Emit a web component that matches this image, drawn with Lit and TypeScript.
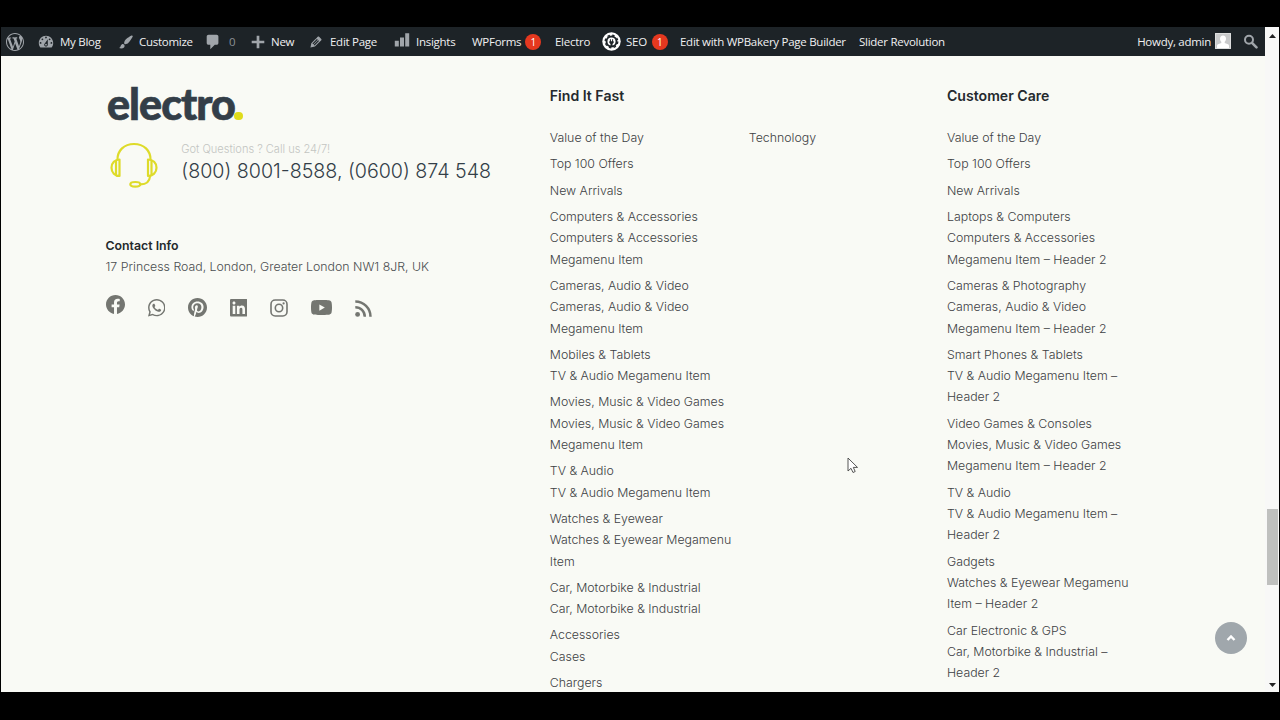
import { LitElement, html, css, svg } from "lit";
import { customElement } from "lit/decorators.js";

const dash = {
  wp: "M20 10c0-5.51-4.49-10-10-10C4.48 0 0 4.49 0 10c0 5.52 4.48 10 10 10 5.51 0 10-4.48 10-10zM7.78 15.37L4.37 6.22c.55-.02 1.17-.08 1.17-.08.5-.06.44-1.13-.06-1.11 0 0-1.45.11-2.37.11-.18 0-.37 0-.58-.01C4.12 2.69 6.87 1.11 10 1.11c2.33 0 4.45.87 6.05 2.34-.68-.11-1.65.39-1.65 1.58 0 .74.45 1.36.9 2.1.35.61.55 1.36.55 2.46 0 1.49-1.4 5-1.4 5l-3.03-8.37c.54-.02.82-.17.82-.17.5-.05.44-1.25-.06-1.22 0 0-1.44.12-2.38.12-.87 0-2.33-.12-2.33-.12-.5-.03-.56 1.2-.06 1.22l.92.08 1.26 3.41zM17.41 10c.24-.64.74-1.87.43-4.25.7 1.29 1.05 2.71 1.05 4.25 0 3.29-1.73 6.24-4.4 7.78.97-2.59 1.94-5.2 2.92-7.78zM6.1 18.09C3.12 16.65 1.11 13.53 1.11 10c0-1.3.23-2.48.72-3.59C3.25 10.3 4.67 14.2 6.1 18.09zm4.03-6.63l2.58 6.98c-.86.29-1.76.45-2.71.45-.79 0-1.57-.11-2.29-.33.81-2.38 1.62-4.74 2.42-7.1z",
  gauge: "M3.76 16h12.48c1.1-1.37 1.76-3.11 1.76-5 0-4.42-3.58-8-8-8s-8 3.58-8 8c0 1.89.66 3.63 1.76 5zM10 4c.55 0 1 .45 1 1s-.45 1-1 1-1-.45-1-1 .45-1 1-1zM6 6c.55 0 1 .45 1 1s-.45 1-1 1-1-.45-1-1 .45-1 1-1zm8 0c.55 0 1 .45 1 1s-.45 1-1 1-1-.45-1-1 .45-1 1-1zm-5.37 5.55L12 7v6c0 1.1-.9 2-2 2s-2-.9-2-2c0-.57.24-1.08.63-1.45zM4 10c.55 0 1 .45 1 1s-.45 1-1 1-1-.45-1-1 .45-1 1-1zm12 0c.55 0 1 .45 1 1s-.45 1-1 1-1-.45-1-1 .45-1 1-1zm-5 3c0-.55-.45-1-1-1s-1 .45-1 1 .45 1 1 1 1-.45 1-1z",
  brush: "M18.33 3.57s.27-.8-.31-1.36c-.53-.52-1.22-.24-1.22-.24-.61.3-5.76 3.47-7.67 5.57-.86.96-2.06 3.79-1.09 4.82.92.98 3.96-.17 4.79-1 2.06-2.06 5.21-7.17 5.5-7.79zM1.4 17.65c2.37-1.56 1.46-3.41 3.23-4.64.93-.65 2.22-.62 3.08.29.63.67.8 2.57-.16 3.46-1.57 1.45-4 1.55-6.15.89z",
  comment: "M5 2h9c1.1 0 2 .9 2 2v7c0 1.1-.9 2-2 2h-2l-5 5v-5H5c-1.1 0-2-.9-2-2V4c0-1.1.9-2 2-2z",
  plus: "M17 8.5v3h-5.5V17h-3v-5.5H3v-3h5.500V3h3v5.500z",
  pencil: "M13.89 3.39l2.71 2.72c.46.46.42 1.24.03 1.640l-8.010 8.020-5.560 1.160 1.160-5.580s7.600-7.630 7.990-8.030c.39-.39 1.220-.39 1.680.07zm-2.730 2.790l-5.590 5.610 1.110 1.110 5.540-5.650zm-2.970 8.230l5.580-5.600-1.070-1.080-5.590 5.600z",
  bars: "M1 11h5v7H1zM7.500 7h5v11h-5zM14 1.500h5V18h-5z",
};

const social = [
  { cls: "fb", box: "8 8 496 496", d: "M504 256C504 119 393 8 256 8S8 119 8 256c0 123.78 90.69 226.38 209.25 245V327.69h-63V256h63v-54.64c0-62.15 37-96.48 93.67-96.48 27.14 0 55.52 4.84 55.52 4.84v61h-31.28c-30.8 0-40.41 19.12-40.41 38.73V256h68.78l-11 71.69h-57.78V501C413.31 482.38 504 379.78 504 256z" },
  { cls: "wa", box: "0 32 448 448", d: "M380.9 97.1C339 55.1 283.2 32 223.9 32c-122.4 0-222 99.6-222 222 0 39.1 10.2 77.3 29.6 111L0 480l117.7-30.9c32.4 17.7 68.9 27 106.1 27h.1c122.3 0 224.1-99.6 224.1-222 0-59.3-25.2-115-67.1-157zm-157 341.6c-33.2 0-65.7-8.9-94-25.7l-6.7-4-69.8 18.3L72 359.2l-4.4-7c-18.5-29.4-28.2-63.3-28.2-98.2 0-101.7 82.8-184.5 184.6-184.5 49.3 0 95.6 19.2 130.4 54.1 34.8 34.9 56.2 81.2 56.1 130.5 0 101.8-84.9 184.6-186.6 184.6zm101.2-138.2c-5.5-2.8-32.8-16.2-37.9-18-5.1-1.9-8.8-2.8-12.5 2.8-3.7 5.6-14.3 18-17.6 21.8-3.2 3.7-6.5 4.2-12 1.4-32.6-16.3-54-29.1-75.5-66-5.7-9.8 5.7-9.1 16.3-30.3 1.8-3.7.9-6.9-.5-9.7-1.4-2.8-12.5-30.1-17.1-41.2-4.5-10.8-9.1-9.3-12.5-9.5-3.2-.2-6.900-.2-10.600-.2-3.700 0-9.700 1.400-14.800 6.900-5.100 5.600-19.400 19-19.400 46.300 0 27.300 19.900 53.700 22.600 57.400 2.800 3.700 39.100 59.700 94.800 83.800 35.200 15.200 49 16.500 66.600 13.900 10.700-1.600 32.800-13.400 37.400-26.400 4.600-13 4.600-24.100 3.200-26.400-1.300-2.500-5-3.900-10.500-6.600z" },
  { cls: "pin", box: "0 8 496 496", d: "M496 256c0 137-111 248-248 248-25.6 0-50.2-3.9-73.4-11.1 10.1-16.5 25.2-43.5 30.8-65 3-11.6 15.4-59 15.4-59 8.1 15.4 31.7 28.5 56.8 28.5 74.8 0 128.7-68.8 128.7-154.3 0-81.9-66.9-143.2-152.9-143.2-107 0-163.9 71.8-163.9 150.1 0 36.4 19.4 81.7 50.3 96.1 4.7 2.2 7.2 1.2 8.3-3.3.8-3.4 5-20.3 6.9-28.1.6-2.5.3-4.7-1.7-7.1-10.1-12.5-18.3-35.3-18.3-56.6 0-54.7 41.4-107.6 112-107.6 60.9 0 103.6 41.5 103.6 100.900 0 67.100-33.900 113.600-78 113.600-24.300 0-42.600-20.100-36.700-44.800 7-29.500 20.500-61.300 20.500-82.600 0-19-10.200-34.900-31.400-34.900-24.900 0-44.900 25.700-44.900 60.200 0 22 7.400 36.800 7.400 36.800s-24.500 103.800-29 123.200c-5 21.400-3 51.600-.9 71.200C65.400 450.900 0 361.100 0 256 0 119 111 8 248 8s248 111 248 248z" },
  { cls: "li", box: "0 32 448 448", d: "M416 32H31.900C14.300 32 0 46.500 0 64.300v383.400C0 465.500 14.300 480 31.900 480H416c17.600 0 32-14.500 32-32.300V64.300c0-17.800-14.400-32.300-32-32.300zM135.400 416H69V202.200h66.500V416zm-33.200-243c-21.300 0-38.500-17.300-38.500-38.500S80.900 96 102.200 96c21.200 0 38.500 17.300 38.500 38.500 0 21.300-17.200 38.500-38.500 38.500zm282.100 243h-66.400V312c0-24.800-.5-56.700-34.500-56.700-34.600 0-39.900 27-39.900 54.900V416h-66.400V202.200h63.700v29.200h.9c8.900-16.800 30.600-34.500 62.900-34.500 67.200 0 79.700 44.300 79.700 101.900V416z" },
  { cls: "ig", box: "0 0 18 18", d: "" },
  { cls: "yt", box: "15 64 546 384", d: "M549.655 124.083c-6.281-23.65-24.787-42.276-48.284-48.597C458.781 64 288 64 288 64S117.22 64 74.629 75.486c-23.497 6.322-42.003 24.947-48.284 48.597-11.412 42.867-11.412 132.305-11.412 132.305s0 89.438 11.412 132.305c6.281 23.650 24.787 41.500 48.284 47.821C117.220 448 288 448 288 448s170.780 0 213.371-11.486c23.497-6.321 42.003-24.171 48.284-47.821 11.412-42.867 11.412-132.305 11.412-132.305s0-89.438-11.412-132.305zm-317.510 213.508V175.185l142.739 81.205-142.739 81.201z" },
  { cls: "rss", box: "0 0 17 17", d: "" },
];

const findItFast = [
  ["Value of the Day"],
  ["Top 100 Offers"],
  ["New Arrivals"],
  ["Computers & Accessories", "Computers & Accessories", "Megamenu Item"],
  ["Cameras, Audio & Video", "Cameras, Audio & Video", "Megamenu Item"],
  ["Mobiles & Tablets", "TV & Audio Megamenu Item"],
  ["Movies, Music & Video Games", "Movies, Music & Video Games", "Megamenu Item"],
  ["TV & Audio", "TV & Audio Megamenu Item"],
  ["Watches & Eyewear", "Watches & Eyewear Megamenu", "Item"],
  ["Car, Motorbike & Industrial", "Car, Motorbike & Industrial"],
  ["Accessories", "Cases"],
  ["Chargers"],
];

const customerCare = [
  ["Value of the Day"],
  ["Top 100 Offers"],
  ["New Arrivals"],
  ["Laptops & Computers", "Computers & Accessories", "Megamenu Item – Header 2"],
  ["Cameras & Photography", "Cameras, Audio & Video", "Megamenu Item – Header 2"],
  ["Smart Phones & Tablets", "TV & Audio Megamenu Item –", "Header 2"],
  ["Video Games & Consoles", "Movies, Music & Video Games", "Megamenu Item – Header 2"],
  ["TV & Audio", "TV & Audio Megamenu Item –", "Header 2"],
  ["Gadgets", "Watches & Eyewear Megamenu", "Item – Header 2"],
  ["Car Electronic & GPS", "Car, Motorbike & Industrial –", "Header 2"],
];

const icon = (name: keyof typeof dash, cls = "") =>
  html`<svg class="ico ${cls}" viewBox="0 0 20 20"><path fill-rule="evenodd" d=${dash[name]} /></svg>`;

@customElement("admin-bar")
class AdminBar extends LitElement {
  static styles = css`
    :host {
      display: flex;
      height: 28.5px;
      box-sizing: border-box;
      background: #1d2327;
      color: #f0f0f1;
      font: 400 11.5px/28px "Open Sans", "Noto Sans", sans-serif;
      letter-spacing: -0.27px;
      white-space: nowrap;
    }
    .items {
      flex: 1;
      display: grid;
      grid-template-columns: 37px 75px 88px 44px 58px 86px 78px 83px 47px 78px 179px auto;
      padding-left: 5px;
    }
    .item, .right { display: flex; align-items: center; }
    .item span, .right span { padding-top: 1px; }
    .ico { width: 18px; height: 18px; fill: #a0a5aa; flex: none; }
    .home { gap: 5px; margin-left: -6px; }
    .brush { gap: 5px; }
    .brush .ico, .pen .ico { width: 16px; height: 16px; }
    .comment { gap: 7px; color: #8b9095; }
    .comment .ico { margin-left: -2px; }
    .new { gap: 4px; }
    .new .ico { margin-left: -1px; }
    .pen { gap: 6px; }
    .chart { gap: 6px; }
    .chart .ico { width: 16px; height: 16px; margin-top: -3px; }
    .item .badge {
      width: 16px; height: 16px; border-radius: 50%; padding: 0;
      background: #e5381f; color: #fff;
      font-size: 10px; line-height: 16px; text-align: center; letter-spacing: 0;
    }
    .forms { gap: 4px; }
    .seo { gap: 5px; }
    .gear { width: 19px; height: 19px; }
    .right { padding-right: 7px; }
    .right span { margin-left: -1px; }
    .avatar { width: 16px; height: 16px; margin: 0 12px 0 4px; }
    .search { width: 15px; height: 15px; }
  `;
  render() {
    return html`
      <div class="items">
        <span class="item">${icon("wp")}</span>
        <span class="item home">${icon("gauge")}<span>My Blog</span></span>
        <span class="item brush">${icon("brush")}<span>Customize</span></span>
        <span class="item comment">${icon("comment")}<span>0</span></span>
        <span class="item new">${icon("plus")}<span>New</span></span>
        <span class="item pen">${icon("pencil")}<span>Edit Page</span></span>
        <span class="item chart">${icon("bars")}<span>Insights</span></span>
        <span class="item forms"><span>WPForms</span><span class="badge">1</span></span>
        <span class="item"><span>Electro</span></span>
        <span class="item seo">
          <svg class="gear" viewBox="0 0 19 19">
            <circle cx="9.500" cy="9.500" r="9.200" fill="#fff" />
            <circle cx="9.500" cy="9.500" r="5" fill="none" stroke="#1d2327" stroke-width="1.900" />
            <circle cx="9.500" cy="9.500" r="6.300" fill="none" stroke="#1d2327" stroke-width="1.300" stroke-dasharray="2.474 2.474" />
            <path d="M7.300 9.200h4.400v1.600l-1.200 1.200v3h-2v-3l-1.200-1.200zM7.900 7.300h1v2h-1zM10.100 7.300h1v2h-1z" fill="#1d2327" />
          </svg>
          <span>SEO</span><span class="badge">1</span>
        </span>
        <span class="item"><span>Edit with WPBakery Page Builder</span></span>
        <span class="item"><span>Slider Revolution</span></span>
      </div>
      <div class="right">
        <span>Howdy, admin</span>
        <svg class="avatar" viewBox="0 0 16 16">
          <path d="M0 0h16v16H0z" fill="#c9cacb" />
          <path d="M.5.5h15v15H.5z" fill="none" stroke="#dddede" />
          <path d="M8 2.500c2 0 3 1.400 3 3.200 0 1.300-.6 2.500-1.300 3.100v1.200l3.300 1.300c.7.300 1 .8 1 1.700v2H2v-2c0-.9.3-1.400 1-1.700L6.300 10V8.800C5.600 8.200 5 7 5 5.700 5 3.900 6 2.500 8 2.500z" fill="#fff" />
        </svg>
        <svg class="search" viewBox="0 0 15 15" fill="none" stroke="#a0a5aa">
          <circle cx="6" cy="5.800" r="4" stroke-width="2" />
          <path d="M9 8.800l4.500 4.500" stroke-width="2.600" stroke-linecap="round" />
        </svg>
      </div>
    `;
  }
}

@customElement("link-list")
class LinkList extends LitElement {
  static properties = { items: { attribute: false } };
  declare items: string[][];
  static styles = css`
    :host { display: flex; flex-direction: column; gap: 4.8px; }
    .entry { display: flex; flex-direction: column; }
    .line { height: 21.4px; white-space: nowrap; }
  `;
  render() {
    return this.items.map(
      (lines) => html`<div class="entry">${lines.map((t) => html`<span class="line">${t}</span>`)}</div>`
    );
  }
}

@customElement("app-root")
class AppRoot extends LitElement {
  static styles = css`
    :host {
      display: block;
      width: 1280px;
      height: 720px;
      box-sizing: border-box;
      padding: 27px 1px 28px;
      background: #000;
      overflow: hidden;
    }
    .window { position: relative; display: flex; height: 665px; background: #f9faf5; overflow: hidden; }
    .main { width: 1264px; display: flex; flex-direction: column; }
    .footer {
      display: grid;
      grid-template-columns: 444.300px 199px 198.200px 200px;
      padding: 29.500px 0 0 104.500px;
      font: 300 12.340px/21.400px Inter, sans-serif;
      color: #3d4144;
    }
    .heading { font-size: 14.100px; font-weight: 600; color: #24292d; height: 42.200px; white-space: nowrap; }
    .brand { display: flex; align-items: flex-end; height: 36.500px; padding-left: 1.500px; }
    .logo { font: 900 43px/37px Lato, sans-serif; letter-spacing: -0.950px; color: #333e48; -webkit-text-stroke: 0.7px #333e48; }
    .dot { width: 8.500px; height: 8.500px; border-radius: 50%; background: #dfdc1c; margin: 0 0 1.500px -0.500px; }
    .call { display: flex; padding: 20px 0 0 4.500px; gap: 23.300px; height: 113.300px; box-sizing: border-box; }
    .headset { width: 48px; height: 46px; }
    .ask { display: block; font-size: 11.050px; line-height: 14px; color: #c3c5c2; white-space: nowrap; }
    .phone { display: block; font-size: 19.650px; line-height: 30px; color: #333e48; white-space: nowrap; }
    .title { font-size: 12.300px; font-weight: 600; color: #24292d; }
    .address { white-space: nowrap; color: #4a4d4f; }
    .social { display: flex; align-items: flex-end; height: 39px; fill: #747671; stroke: none; }
    .fb { width: 19px; height: 19px; margin: 0 23px 2.500px 0; }
    .wa { width: 17.500px; height: 17.500px; margin-right: 22.500px; }
    .pin { width: 19px; height: 19px; margin-right: 23px; }
    .li { width: 17.500px; height: 17.500px; margin-right: 22.500px; }
    .ig { width: 18px; height: 18px; margin-right: 23px; }
    .yt { width: 21px; height: 15px; margin: 0 23.500px 1.500px 0; }
    .rss { width: 17px; height: 17px; }
    .scroll {
      width: 14px; display: flex; flex-direction: column; align-items: center;
      background: #f8f8f7; box-sizing: border-box; padding: 7px 0 5px;
    }
    .arrow { width: 7px; height: 4px; fill: #222; }
    .thumb { width: 11px; height: 76px; margin: 471px 0 auto 0; background: #bfc0be; }
    .top {
      position: absolute; left: 1214px; top: 595px; width: 32px; height: 32px;
      border-radius: 50%; background: #a0a7ac;
    }
    .cursor { position: absolute; left: 846px; top: 430px; width: 12px; height: 18px; }
  `;
  render() {
    return html`
      <div class="window">
        <div class="main">
          <admin-bar></admin-bar>
          <div class="footer">
            <div>
              <div class="brand"><span class="logo">electro</span><span class="dot"></span></div>
              <div class="call">
                <svg class="headset" viewBox="0 0 48 46" fill="none" stroke="#dedb2a" stroke-width="2.200" stroke-linecap="round" stroke-linejoin="round">
                  <path d="M7.500 17.500C7.500 8.500 14 2 24 2s16.500 6.500 16.500 15.500" />
                  <path d="M9.500 17.500v16.500C5 34 1.500 30.500 1.500 25.700S5 17.500 9.500 17.500zM38 17.500v16.500c5 0 8.500-3.500 8.500-8.300S43 17.500 38 17.500z" />
                  <path d="M6 19v13.500M41.500 19v13.500" />
                  <path d="M40 34.500c-.5 5.500-4 7.800-9.500 7.800" />
                  <ellipse cx="25.300" cy="42.300" rx="5" ry="2.300" />
                </svg>
                <div>
                  <span class="ask">Got Questions ? Call us 24/7!</span>
                  <span class="phone">(800) 8001-8588, (0600) 874 548</span>
                </div>
              </div>
              <div class="title">Contact Info</div>
              <div class="address">17 Princess Road, London, Greater London NW1 8JR, UK</div>
              <div class="social">
                ${social.map(
                  (s) => html`<svg class=${s.cls} viewBox=${s.box}>
                    ${s.cls === "ig"
                      ? svg`<rect x="1" y="1" width="16" height="16" rx="4.200" fill="none" stroke="#747671" stroke-width="1.600"/><circle cx="9" cy="9" r="3.700" fill="none" stroke="#747671" stroke-width="1.600"/><circle cx="13.600" cy="4.400" r="1.100"/>`
                      : s.cls === "rss"
                      ? svg`<circle cx="2.600" cy="14.400" r="2.400"/><path d="M.3 7.200a9.500 9.500 0 0 1 9.500 9.500M.3 1.500a15.200 15.200 0 0 1 15.200 15.200" fill="none" stroke="#747671" stroke-width="2.500"/>`
                      : svg`<path d=${s.d} />`}
                  </svg>`
                )}
              </div>
            </div>
            <div>
              <div class="heading">Find It Fast</div>
              <link-list .items=${findItFast}></link-list>
            </div>
            <div>
              <div class="heading"></div>
              <link-list .items=${[["Technology"]]}></link-list>
            </div>
            <div>
              <div class="heading">Customer Care</div>
              <link-list .items=${customerCare}></link-list>
            </div>
          </div>
        </div>
        <div class="scroll">
          <svg class="arrow" viewBox="0 0 7 4"><path d="M0 4L3.500 0 7 4z" /></svg>
          <div class="thumb"></div>
          <svg class="arrow" viewBox="0 0 7 4"><path d="M0 0l3.500 4L7 0z" /></svg>
        </div>
        <svg class="top" viewBox="0 0 32 32"><path d="M12.500 18l3.500-3.500 3.500 3.500" fill="none" stroke="#fff" stroke-width="2.400" /></svg>
        <svg class="cursor" viewBox="0 0 12 18"><path d="M1 1v13l3-2.700 2 4.200 2.200-1-1.900-4.100H10.500z" fill="#fff" stroke="#444" stroke-width=".9" /></svg>
      </div>
    `;
  }
}
